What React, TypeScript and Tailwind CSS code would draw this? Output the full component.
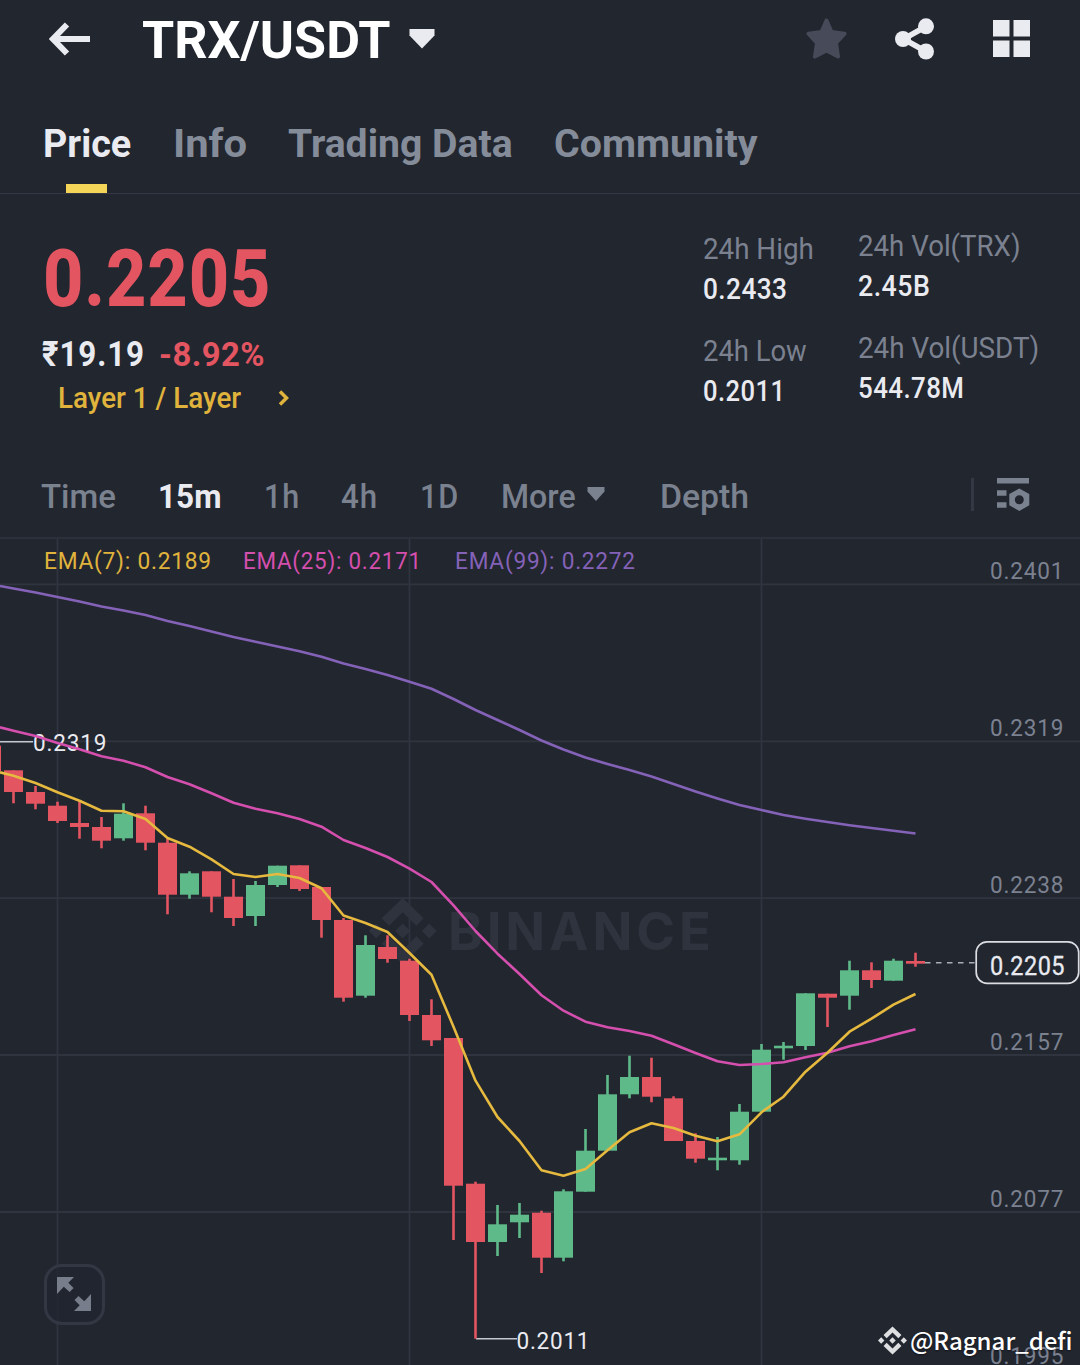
import { useLayoutEffect, useRef, useState } from 'react';
import type { ReactNode } from 'react';

type Candle = {
  up?: boolean;
  open: number;
  close: number;
  high: number;
  low: number;
};

const STEP = 22;
const FIRST_X = 13.5;

// top / bottom of the body, then top / bottom of the wick, in chart pixels
const raw: [string, number, number, number, number][] = [
  ['r', 770.3, 792, 770.3, 803.3],
  ['r', 792, 803.7, 786, 809.3],
  ['r', 805.7, 821, 801.7, 823],
  ['r', 823, 827, 801.7, 838.7],
  ['r', 827, 840.7, 817, 848.3],
  ['g', 813.7, 838.3, 803.3, 840.7],
  ['r', 813.3, 842.7, 805.7, 850.3],
  ['r', 842.7, 894.7, 838.7, 914.3],
  ['g', 873.3, 894.7, 871.3, 898.7],
  ['r', 871.3, 896.7, 871.3, 912.3],
  ['r', 896.7, 918, 879, 926],
  ['g', 885, 916, 881, 926],
  ['g', 865.7, 885, 865.7, 887],
  ['r', 865.3, 889, 865.3, 891],
  ['r', 887, 920, 887, 937.7],
  ['r', 920, 997.7, 918, 1001.7],
  ['g', 945, 995.7, 935.3, 997.7],
  ['r', 947, 959, 935.3, 962.7],
  ['r', 960.7, 1015, 958.7, 1021],
  ['r', 1015, 1040.3, 999.3, 1046],
  ['r', 1038, 1185.7, 1038, 1240],
  ['r', 1183.7, 1242, 1181.7, 1338.7],
  ['g', 1224.3, 1242, 1205, 1256],
  ['g', 1214.7, 1222.3, 1203, 1238],
  ['r', 1212.7, 1257.7, 1210.7, 1273],
  ['g', 1191.3, 1257.7, 1189.3, 1261.3],
  ['g', 1150.7, 1191.7, 1129, 1191.7],
  ['g', 1094.3, 1150.7, 1075, 1150.7],
  ['g', 1077, 1094.3, 1055.7, 1098.3],
  ['r', 1077, 1096.7, 1057.7, 1102.3],
  ['r', 1098.3, 1141, 1096.3, 1141],
  ['r', 1141, 1158.7, 1133.3, 1162.7],
  ['g', 1157.7, 1160.3, 1137, 1170.3],
  ['g', 1111.7, 1160.3, 1104, 1164.7],
  ['g', 1049.7, 1111.7, 1044, 1111.7],
  ['g', 1045.7, 1048.3, 1042, 1059.7],
  ['g', 993.3, 1046, 993.3, 1050],
  ['r', 993.7, 997.7, 993.7, 1027],
  ['g', 970.3, 995.7, 960.7, 1009.7],
  ['r', 970.3, 980, 962.3, 988],
  ['g', 960.7, 980.7, 958.7, 980.7],
  ['r', 961, 963.7, 952.7, 966.7],
];

const candles: Candle[] = raw.map(([side, open, close, high, low]) => ({
  up: side === 'g',
  open,
  close,
  high,
  low,
}));

const ema7 = [
  775.7, 783, 792.3, 800.7, 810.7, 811.3, 819, 838, 846.7, 859.3, 874, 877, 874, 878, 888.3, 915.5, 923, 932, 953,
  974.7, 1026.7, 1080.7, 1117, 1141, 1170.3, 1175.7, 1169, 1150.3, 1132.3, 1123.3, 1128, 1135.7, 1141.3, 1134.3,
  1112.3, 1096.7, 1071.7, 1052.7, 1031.7, 1018.7, 1004.7, 994,
];

const ema25 = [
  730.7, 736, 743, 749.3, 756.3, 760.7, 767.3, 777, 784.3, 793.3, 802.7, 808.7, 813.3, 819, 826.7, 840, 848, 857,
  868.7, 882, 905.3, 931, 953.7, 974, 995.3, 1010.7, 1021.7, 1027.3, 1031, 1035.7, 1044.3, 1053, 1061.3, 1065, 1064,
  1062.3, 1057.3, 1052.7, 1046.3, 1041.3, 1035, 1029.3,
];

const ema99 = [
  588.5, 592.5, 597, 601.5, 606.5, 610.5, 615, 621, 626, 631.5, 637, 641.8, 646.5, 651.3, 656.7, 663.5, 669, 675,
  681.7, 688.7, 699, 710, 720, 730, 740.5, 749.5, 757.5, 764, 770, 776.5, 784, 791.5, 798.5, 805, 810, 815, 818.7,
  822, 825.2, 828, 830.8, 833.5,
];

const toPoints = (startY: number, values: number[]) =>
  [`0,${startY}`, ...values.map((y, i) => `${FIRST_X + i * STEP},${y}`)].join(' ');

const axis = [
  { label: '0.2401', y: 584.3 },
  { label: '0.2319', y: 741.3 },
  { label: '0.2238', y: 898.2 },
  { label: '0.2157', y: 1055 },
  { label: '0.2077', y: 1212 },
  { label: '0.1995', y: 1369 },
];

// Condenses (or widens) one line of text to the given width
function Fit({ width, className = '', children }: { width: number; className?: string; children: ReactNode }) {
  const ref = useRef<HTMLSpanElement>(null);
  const [scale, setScale] = useState(1);

  useLayoutEffect(() => {
    if (ref.current) setScale(width / ref.current.offsetWidth);
  }, [width]);

  return (
    <span className={`block shrink-0 ${className}`} style={{ width }}>
      <span ref={ref} className="inline-block origin-left whitespace-nowrap align-top" style={{ transform: `scaleX(${scale})` }}>
        {children}
      </span>
    </span>
  );
}

// Narrow, widely spaced figures used on the chart
function PriceText({ x, y, width, children }: { x: number; y: number; width: number; children: string }) {
  return (
    <text transform={`translate(${x} ${y}) scale(.94 1)`} textLength={width / 0.94}>
      {children}
    </text>
  );
}

function BinanceMark() {
  return (
    <>
      <path d="M0-33 21-12.7 13.7-5.3 0-18.7-13.7-5.3-21-12.7Z" />
      <path d="M0 33 21 12.7 13.7 5.3 0 18.7-13.7 5.3-21 12.7Z" />
      <path d="M0-7.6 7.6 0 0 7.6-7.6 0Z" />
      <path d="M26.5-7.4 33.9 0 26.5 7.4 19.1 0Z" />
      <path d="M-26.5-7.4-19.1 0-26.5 7.4-33.9 0Z" />
    </>
  );
}

function Header() {
  return (
    <header className="flex h-[77px] items-center pl-[49px] pr-[50px] text-[#eaebf0]">
      <svg className="h-[34px] w-[42px]" viewBox="0 0 42 34" fill="none" stroke="currentColor" strokeWidth="6">
        <path d="M41 17H5" />
        <path d="M18 2.5 4 17l14 14.5" />
      </svg>
      <Fit width={248} className="ml-[51px] pt-[5px] text-[52px] font-bold leading-[60px] text-white">
        TRX/USDT
      </Fit>
      <svg className="ml-[19px] h-5 w-[26px]" viewBox="0 0 26 20" fill="currentColor">
        <path d="M.5 0h25v6.5L13 19.5.5 6.5Z" />
      </svg>
      <div className="ml-auto flex items-center">
        <svg className="h-[42px] w-[42px]" viewBox="0 0 42 42" fill="#474b59" stroke="#474b59" strokeWidth="4" strokeLinejoin="round">
          <path d="M20.5 2.5 25.5 14 38.5 15.7 30 25 32 38.5 20.5 32.5 9 38.5 11 25 2.5 15.7 15.5 14Z" />
        </svg>
        <svg className="ml-[47px] h-[42px] w-10" viewBox="0 0 40 42" fill="currentColor">
          <path d="M31 8.5 8.5 21 31 33.5" fill="none" stroke="currentColor" strokeWidth="5.5" />
          <circle cx="8" cy="21" r="8" />
          <circle cx="31" cy="8.3" r="8" />
          <circle cx="31" cy="33.5" r="8" />
        </svg>
        <svg className="ml-[58px] h-[37px] w-[37px]" viewBox="0 0 37 37" fill="currentColor">
          <path d="M0 0h16.5v16.5H0ZM20.5 0H37v16.5H20.5ZM0 20.5h16.5V37H0ZM20.5 20.5H37V37H20.5Z" />
        </svg>
      </div>
    </header>
  );
}

function Tabs() {
  return (
    <nav className="flex h-[117px] border-b border-[#333844] pl-[43px] pt-[43px] text-[39.5px] font-bold leading-[48px] text-[#858c99]">
      <div className="flex flex-col items-center">
        <Fit width={88} className="text-[#eaebf0]">Price</Fit>
        <div className="mr-0.5 mt-4 h-[9px] w-[41px] bg-[#f5d558]" />
      </div>
      <Fit width={74} className="ml-[42px]">Info</Fit>
      <Fit width={225} className="ml-[41px]">Trading Data</Fit>
      <Fit width={204} className="ml-[41px]">Community</Fit>
    </nav>
  );
}

function Stat({ label, value, labelWidth, valueWidth }: { label: string; value: string; labelWidth: number; valueWidth: number }) {
  return (
    <div className="text-[29px] leading-[40px]">
      <Fit width={labelWidth} className="text-[#7b818f]">{label}</Fit>
      <Fit width={valueWidth} className="font-medium tracking-[0.5px] text-[#eaebf0]">{value}</Fit>
    </div>
  );
}

function Summary() {
  return (
    <section className="flex h-[261px] justify-between pl-[43px] pr-10">
      <div className="pt-[45px]">
        <Fit width={228} className="text-[80px] font-extrabold leading-[80px] tracking-[1px] text-[#e35561]">0.2205</Fit>
        <div className="mt-4 flex gap-[14px] text-[35px] font-bold leading-[40px]">
          <Fit width={103} className="-ml-px tracking-[1px] text-[#eaebf0]">₹19.19</Fit>
          <Fit width={106} className="-mt-px text-[34px] tracking-[0.5px] text-[#e35561]">-8.92%</Fit>
        </div>
        <div className="mt-[5px] flex items-center pl-[15px] text-[#e0b43c]">
          <Fit width={183} className="text-[29px] font-medium leading-[36px]">Layer 1 / Layer</Fit>
          <svg className="ml-[37px] h-4 w-3" viewBox="0 0 12 16" fill="none" stroke="currentColor" strokeWidth="3.5">
            <path d="M2 1.5 8.5 8 2 14.5" />
          </svg>
        </div>
      </div>
      <div className="flex pt-8">
        <div className="flex w-[155px] flex-col gap-[22px] pt-[3px]">
          <Stat label="24h High" value="0.2433" labelWidth={111} valueWidth={84} />
          <Stat label="24h Low" value="0.2011" labelWidth={104} valueWidth={82} />
        </div>
        <div className="flex w-[182px] flex-col gap-[22px]">
          <Stat label="24h Vol(TRX)" value="2.45B" labelWidth={163} valueWidth={72} />
          <Stat label="24h Vol(USDT)" value="544.78M" labelWidth={181} valueWidth={106} />
        </div>
      </div>
    </section>
  );
}

function Timeframes() {
  return (
    <div className="flex h-[82px] items-center pl-[41px] pr-[50px] text-[33px] font-medium leading-[40px] text-[#7b828f]">
      <Fit width={75} className="pt-0.5">Time</Fit>
      <Fit width={63} className="ml-[42px] pt-0.5 font-bold text-[#eaebf0]">15m</Fit>
      <Fit width={36} className="ml-[43px] pt-0.5 tracking-[1px]">1h</Fit>
      <Fit width={37} className="ml-[41px] pt-0.5 tracking-[1px]">4h</Fit>
      <Fit width={39} className="ml-[42px] pt-0.5 tracking-[1px]">1D</Fit>
      <Fit width={75} className="ml-[42px] pt-0.5">More</Fit>
      <svg className="-mt-1 ml-[11px] h-[14px] w-[18px]" viewBox="0 0 18 14" fill="currentColor">
        <path d="M.5 0h17v4.5L9 14 .5 4.5Z" />
      </svg>
      <Fit width={89} className="ml-[55px] pt-0.5">Depth</Fit>
      <div className="-mt-1 ml-auto h-[33px] w-[3px] bg-[#333844]" />
      <svg className="-mt-1 ml-[23px] h-[34px] w-[33px]" viewBox="0 0 33 34" fill="currentColor">
        <path d="M0 1h32v5.5H0ZM0 13.3h9.5v5.5H0ZM0 25.3h9.5v5.5H0Z" />
        <path
          fillRule="evenodd"
          d="M22.3 11.5 32.3 17v11.3L22.3 34l-10-5.7V17ZM22.3 18.2a4.5 4.5 0 1 0 0 9 4.5 4.5 0 0 0 0-9Z"
        />
      </svg>
    </div>
  );
}

function Chart() {
  return (
    <div className="relative h-[828px] border-t-2 border-[#2b303a]">
      <svg className="block h-[826px] w-[1080px]" viewBox="0 539 1080 826" fontFamily="Roboto, sans-serif">
        <g stroke="#2f343f" strokeWidth="1.8">
          {axis.map(({ y }) => (
            <path key={y} d={`M0 ${y}H1080`} />
          ))}
          {[57.5, 409.5, 761.5].map((x) => (
            <path key={x} d={`M${x} 539V1365`} />
          ))}
        </g>

        {/* watermark */}
        <g fill="#2f333d">
          <g transform="translate(402.7 931)">
            <BinanceMark />
          </g>
          <text x="448" y="950" fontFamily="Inter, sans-serif" fontSize="52.5" fontWeight="700" textLength="263">
            BINANCE
          </text>
        </g>

        <g fill="#7b818f" fontSize="24">
          {axis.map(({ label, y }) => (
            <PriceText key={label} x={990} y={y - 5.3} width={73.5}>
              {label}
            </PriceText>
          ))}
        </g>

        <path d="M0 741.7H33M476 1338.7H517" stroke="#c5c8ce" strokeWidth="1.6" />
        <g fill="#eaebf0" fontSize="24">
          <PriceText x={33} y={750.5} width={73.5}>0.2319</PriceText>
          <PriceText x={516.5} y={1348.5} width={73}>0.2011</PriceText>
        </g>

        <rect x="-18" y="745.7" width="19" height="25.3" fill="#e35561" />
        {candles.map((c, i) => {
          const x = FIRST_X + i * STEP;
          return (
            <g key={i} fill={c.up ? '#5fba89' : '#e35561'}>
              <rect x={x - 1.3} y={c.high} width="2.6" height={c.low - c.high} />
              <rect x={x - 9.5} y={c.open} width="19" height={c.close - c.open} />
            </g>
          );
        })}

        <g fill="none" strokeWidth="2.6" strokeLinejoin="round">
          <polyline points={toPoints(586, ema99)} stroke="#8462b8" />
          <polyline points={toPoints(727.3, ema25)} stroke="#d44fae" />
          <polyline points={toPoints(772.3, ema7)} stroke="#e6b93f" />
        </g>

        {/* last price */}
        <path d="M925 962.7H976" stroke="#a9adb5" strokeWidth="1.5" strokeDasharray="5.5 5.5" />
        <rect x="976.2" y="941.8" width="102.5" height="41.5" rx="11" fill="#22262f" stroke="#dcdde2" strokeWidth="1.7" />
        <g fill="#eaebf0" fontSize="25" stroke="#eaebf0" strokeWidth="0.3">
          <PriceText x={990} y={975} width={74.5}>0.2205</PriceText>
        </g>
      </svg>

      <div className="absolute left-[44px] top-[5px] flex text-[23.5px] leading-[34px] tracking-[0.8px]">
        <Fit width={168} className="text-[#e0b43c]">EMA(7): 0.2189</Fit>
        <Fit width={179} className="ml-[31px] text-[#d44fae]">EMA(25): 0.2171</Fit>
        <Fit width={181} className="ml-[33px] text-[#8462b8]">EMA(99): 0.2272</Fit>
      </div>

      <button className="absolute bottom-10 left-11 flex h-[61px] w-[61px] items-center justify-center rounded-[18px] border-[3px] border-[#333744] bg-[#22262f]/80">
        <svg className="-ml-px -mt-px h-[34px] w-[34px]" viewBox="0 0 34 34" fill="#777d8a">
          <path d="M0 0h17l-5.7 5.7 5.3 5.3-4 4-5.8-5.3L0 17Z" />
          <path d="M34 34H17l5.7-5.7-5.2-5.3 4-4 5.8 5.3L34 17Z" />
        </svg>
      </button>

      <div className="absolute bottom-[5px] right-[7px] flex items-center">
        <svg className="mr-[3px] h-[29px] w-[29px]" viewBox="-34 -34 68 68" fill="#dedfe1">
          <BinanceMark />
        </svg>
        <Fit width={163} className="font-['Noto_Sans_CJK_SC',sans-serif] text-[24px] font-medium leading-[40px] text-white [text-shadow:0_1px_2px_#0008]">
          @Ragnar_defi
        </Fit>
      </div>
    </div>
  );
}

export default function App() {
  return (
    <main className="h-[1365px] w-[1080px] overflow-hidden bg-[#22262f] font-['Roboto',sans-serif]">
      <Header />
      <Tabs />
      <Summary />
      <Timeframes />
      <Chart />
    </main>
  );
}
